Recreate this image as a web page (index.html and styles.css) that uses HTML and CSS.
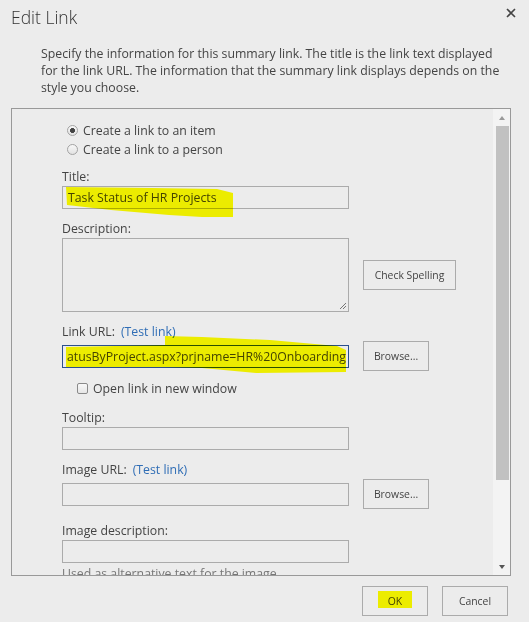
FILE: index.html
```html
<!DOCTYPE html>
<html lang="en">
<head>
	<meta charset="UTF-8">
	<title>Edit Link</title>
	<link rel="stylesheet" href="styles.css">
</head>
<body>
	<div class="dialog">
		<div class="dlg-head">
			<h1 class="dlg-title">Edit Link</h1>
			<svg class="dlg-close" width="10" height="10" viewBox="0 0 10 10"><path d="M1 1L9 9M9 1L1 9" stroke="#444" stroke-width="1.6"/></svg>
		</div>
		<p class="intro">Specify the information for this summary link. The title is the link text displayed for the link URL. The information that the summary link displays depends on the style you choose.</p>

		<div class="frame">
			<div class="frame-body">
				<div class="radios">
					<label class="opt"><span class="radio checked"></span>Create a link to an item</label>
					<label class="opt"><span class="radio"></span>Create a link to a person</label>
				</div>

				<div class="field">
					<div class="lbl">Title:</div>
					<div class="row">
						<div class="input">Task Status of HR Projects
							<svg class="hl hl-title" width="175" height="34" viewBox="0 0 175 34"><path d="M4 1L90 2L155 3L171 7L171 31L140 31L107 29L49 24L5 19Z"/></svg>
						</div>
					</div>
				</div>

				<div class="field">
					<div class="lbl">Description:</div>
					<div class="row">
						<div class="input textarea">
							<svg class="grip" width="9" height="9" viewBox="0 0 9 9"><path d="M8 2L2 8M8 5L5 8" stroke="#777" stroke-width="1"/></svg>
						</div>
						<button class="btn btn-spell">Check Spelling</button>
					</div>
				</div>

				<div class="field">
					<div class="lbl">Link URL:<a class="test-link">(Test link)</a></div>
					<div class="row">
						<div class="input focus">atusByProject.aspx?prjname=HR%20Onboarding
							<svg class="hl hl-url" width="290" height="42" viewBox="0 0 290 42"><path d="M4 12L103 10L103 1L140 2L208 5L275 11L284 15L284 37L194 38L140 33L103 32L4 32Z"/></svg>
						</div>
						<button class="btn">Browse...</button>
					</div>
					<label class="opt check-row"><span class="checkbox"></span>Open link in new window</label>
				</div>

				<div class="field">
					<div class="lbl">Tooltip:</div>
					<div class="row"><div class="input"></div></div>
				</div>

				<div class="field field-img">
					<div class="lbl">Image URL:<a class="test-link">(Test link)</a></div>
					<div class="row">
						<div class="input"></div>
						<button class="btn">Browse...</button>
					</div>
				</div>

				<div class="field">
					<div class="lbl">Image description:</div>
					<div class="row"><div class="input"></div></div>
					<div class="hint">Used as alternative text for the image</div>
				</div>
			</div>
			<div class="scrollbar">
				<span class="sb-btn"><span class="tri-up"></span></span>
				<span class="sb-thumb"></span>
				<span class="sb-space"></span>
				<span class="sb-btn"><span class="tri-down"></span></span>
			</div>
		</div>

		<div class="actions">
			<button class="btn btn-act">OK
				<svg class="hl hl-ok" width="34" height="17"><rect width="34" height="17"/></svg>
			</button>
			<button class="btn btn-act">Cancel</button>
		</div>
	</div>
</body>
</html>
```

FILE: styles.css
```css
*{
	margin: 0;
	padding: 0;
}
body{
	background-color: #ececec;
	font-family: "Open Sans", "Liberation Sans", sans-serif;
	font-size: 12.3px;
	color: #444;
}
.dialog{
	padding: 5px 13px 0 11px;
}
.dlg-head{
	display: flex;
	justify-content: space-between;
	align-items: flex-start;
}
.dlg-title{
	font-size: 17.5px;
	font-weight: 300;
	line-height: 24px;
	color: #333;
}
.dlg-close{
	margin-top: 3px;
}
.intro{
	margin: 16px 0 12px 30px;
	width: 462px;
	line-height: 17px;
}
.frame{
	width: 500px;
	height: 468px;
	box-sizing: border-box;
	border: 1px solid #999;
	display: flex;
	overflow: hidden;
}
.frame-body{
	flex: 1;
	padding: 12px 0 0 50px;
	overflow: hidden;
}
.radios{
	padding-left: 5px;
	margin-bottom: 9px;
}
.opt{
	display: flex;
	align-items: center;
	line-height: 19px;
}
.radio{
	width: 11px;
	height: 11px;
	box-sizing: border-box;
	border: 1px solid #a3a3a3;
	border-radius: 50%;
	background: linear-gradient(#f8f8f8, #e2e2e2);
	margin-right: 5px;
}
.radio.checked{
	background: radial-gradient(circle, #444 0, #444 2.2px, transparent 2.8px), linear-gradient(#f8f8f8, #e2e2e2);
}
.field{
	margin-bottom: 11px;
}
.field-img{
	margin-bottom: 13px;
}
.lbl{
	line-height: 17px;
	margin-bottom: 1px;
}
.test-link{
	color: #2f6db5;
	margin-left: 6px;
}
.row{
	display: flex;
	align-items: center;
	gap: 14px;
}
.input{
	position: relative;
	width: 287px;
	height: 23px;
	box-sizing: border-box;
	border: 1px solid #ababab;
	padding: 0 5px;
	line-height: 21px;
	white-space: nowrap;
}
.input.focus{
	border-color: #2a4f8e;
	padding-left: 4px;
}
.textarea{
	height: 74px;
}
.grip{
	position: absolute;
	right: 1px;
	bottom: 1px;
}
.btn{
	position: relative;
	width: 66px;
	height: 30px;
	border: 1px solid #ababab;
	background-color: transparent;
	font-family: "Open Sans", "Liberation Sans", sans-serif;
	font-size: 10.4px;
	color: #444;
}
.btn-spell{
	width: 93px;
}
.check-row{
	padding-left: 15px;
	margin: 8px 0 4px;
}
.checkbox{
	width: 11px;
	height: 11px;
	box-sizing: border-box;
	border: 1px solid #8a8a8a;
	border-radius: 2px;
	background: linear-gradient(#f8f8f8, #e6e6e6);
	margin-right: 5px;
}
.hint{
	color: #777;
	line-height: 17px;
	margin-top: 2px;
}
.hl{
	position: absolute;
	fill: #ffff00;
	mix-blend-mode: multiply;
	pointer-events: none;
	overflow: visible;
}
.hl-title{
	left: -1px;
	top: -1px;
}
.hl-url{
	left: -1px;
	top: -11px;
}
.hl-ok{
	left: 15px;
	top: 4px;
}
.scrollbar{
	width: 17px;
	background-color: #f3f3f3;
	display: flex;
	flex-direction: column;
	align-items: center;
}
.sb-btn{
	height: 17px;
	display: flex;
	align-items: center;
	justify-content: center;
	width: 100%;
}
.tri-up{
	border-left: 3.5px solid transparent;
	border-right: 3.5px solid transparent;
	border-bottom: 4px solid #999;
}
.tri-down{
	border-left: 3.5px solid transparent;
	border-right: 3.5px solid transparent;
	border-top: 4px solid #555;
}
.sb-thumb{
	width: 13px;
	height: 354px;
	background-color: #c1c1c1;
	margin-left: 1px;
}
.sb-space{
	flex: 1;
}
.actions{
	display: flex;
	justify-content: flex-end;
	gap: 14px;
	padding-right: 8px;
	margin-top: 10px;
}
```
